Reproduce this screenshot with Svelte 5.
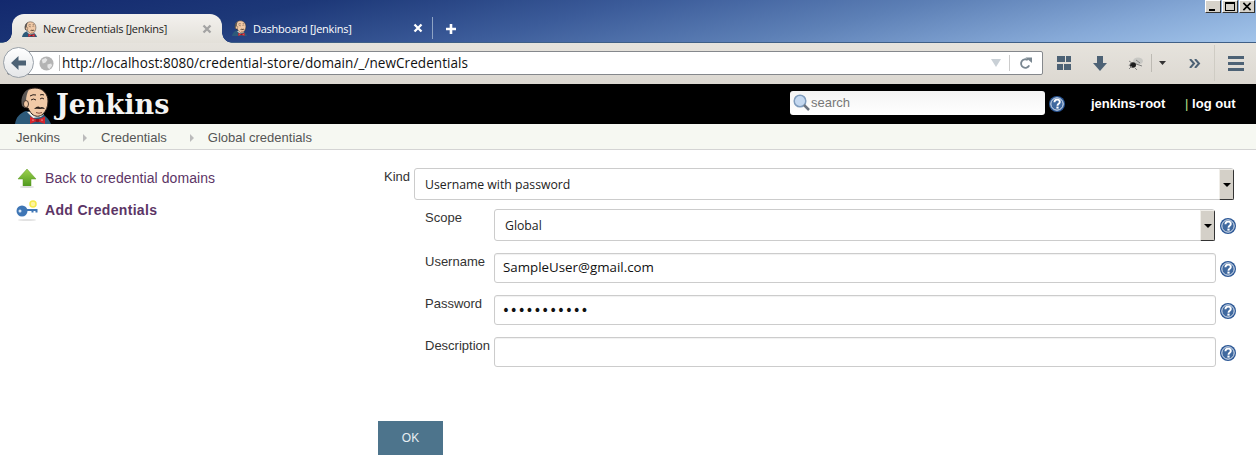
<script>
  const crumbs = ['Jenkins', 'Credentials', 'Global credentials'];
  const rows = [
    { label: 'Username', type: 'text', value: 'SampleUser@gmail.com' },
    { label: 'Password', type: 'password', value: 'samplepass1' },
    { label: 'Description', type: 'text', value: '' }
  ];
</script>

<svg class="defs" width="0" height="0" aria-hidden="true">
  <defs>
    <symbol id="butler" viewBox="0 0 38 38">
      <path d="M0 38c1-7 5-11 11-13l14 2c5 2 9 6 11 11z" fill="#2d5a7a"/>
      <path d="M12 26l6 6 8-1 3-3-6-3z" fill="#f4f1ea"/>
      <path d="M8 18C6 8 12 2 20 2c8 0 13 6 13 13 0 6-2 10-5 13-3 3-8 3-11 0-2-2-3-4-4-6-3 0-5-1-5-4z" fill="#f1c9a6" stroke="#2a1f1a" stroke-width="1"/>
      <path d="M7 20C5 11 9 5 14 3c-2 4-3 8-3 12l1 3-2 4z" fill="#5a5654"/>
      <ellipse cx="11" cy="18" rx="2.500" ry="3.500" fill="#f1c9a6" stroke="#2a1f1a" stroke-width=".8"/>
      <path d="M16 14q2.500-2 5 0M25 13q2-2 4 0M15 10q3-2 6-1M25 9q2-1 4 0" fill="none" stroke="#2a1f1a" stroke-width="1"/>
      <path d="M19 23q4-4 6-1.500 3-1.500 5 1.500-3-.5-5 0-3-.5-6 0z" fill="#2a1f1a"/>
      <path d="M21 26.500q3 1.500 6 0" fill="none" stroke="#7a3a2a" stroke-width=".9"/>
      <path d="M15 30.500l7 3.500 8-3.500V38l-8-3-7 3z" fill="#d4252c"/>
      <circle cx="22.500" cy="34.500" r="1.800" fill="#a01218"/>
      <circle cx="18" cy="34" r=".6" fill="#fff"/><circle cx="27" cy="34" r=".6" fill="#fff"/>
    </symbol>
    <symbol id="help" viewBox="0 0 16 16">
      <circle cx="8" cy="8" r="8" fill="#2a5695"/>
      <circle cx="8" cy="8" r="6.200" fill="#40699f" stroke="#e4ebf4" stroke-width="1"/>
      <path d="M5.400 6.200C5.500 4.500 6.700 3.600 8.100 3.600c1.600 0 2.700.9 2.700 2.300 0 1.900-2.300 1.900-2.300 3.800" fill="none" stroke="#fff" stroke-width="1.900"/>
      <rect x="7.400" y="10.600" width="2.200" height="2" fill="#fff"/>
    </symbol>
    <symbol id="tabx" viewBox="0 0 10 10">
      <path d="M1.500 1.500l7 7M8.500 1.500l-7 7" stroke="currentColor" stroke-width="2.300" fill="none"/>
    </symbol>
  </defs>
</svg>

<div class="chrome">
  <div class="titlebar">
    <div class="tab active">
      <svg class="favicon"><use href="#butler"/></svg>
      <span class="tab-title">New Credentials [Jenkins]</span>
      <svg class="tab-x"><use href="#tabx"/></svg>
    </div>
    <div class="tab">
      <svg class="favicon"><use href="#butler"/></svg>
      <span class="tab-title">Dashboard [Jenkins]</span>
      <svg class="tab-x"><use href="#tabx"/></svg>
    </div>
    <span class="tab-sep"></span>
    <svg class="plus" width="12" height="12" viewBox="0 0 12 12"><path d="M6 1v10M1 6h10" stroke="#fff" stroke-width="2.600"/></svg>
    <div class="winbtns">
      <span class="winbtn"><i class="min"></i></span>
      <span class="winbtn"><i class="max"></i></span>
      <span class="winbtn"><svg class="winx" viewBox="0 0 10 10"><path d="M1 1l8 8M9 1l-8 8" stroke="#000" stroke-width="1.800"/></svg></span>
    </div>
  </div>

  <div class="toolbar">
    <div class="urlbar">
      <div class="back">
        <svg width="15" height="14" viewBox="0 0 15 14"><path d="M7.500 0 0 7l7.500 7V9.500H15v-5H7.500z" fill="#4d6275"/></svg>
      </div>
      <svg class="globe" width="15" height="15" viewBox="0 0 16 16"><circle cx="8" cy="8" r="7.500" fill="#b4b4b4"/><path d="M3 4l4-2 2 2-2 3-3 1zM9 9l4-1 1 2-3 4-2-2z" fill="#e6e6e6"/></svg>
      <span class="url-sep"></span>
      <span class="url">http://localhost:8080/credential-store/domain/_/newCredentials</span>
      <svg class="tri" width="10" height="8" viewBox="0 0 10 8"><path d="M0 0h10L5 8z" fill="#c9d0d6"/></svg>
      <span class="url-sep2"></span>
      <svg class="reload" width="13" height="13" viewBox="0 0 14 13"><path d="M11 8.500A4.600 4.600 0 1 1 9.500 2.800" fill="none" stroke="#7a8791" stroke-width="2"/><path d="M7 0h7v6z" fill="#7a8791"/></svg>
    </div>
    <div class="tools">
      <svg width="14" height="14" viewBox="0 0 14 14"><path d="M0 0h8v6H0zM9 0h5v6H9zM0 8h6v6H0zM7 8h7v6H7z" fill="#4d6275"/></svg>
      <svg class="t-down" width="14" height="15" viewBox="0 0 14 15"><path d="M4 0h6v7h4l-7 8-7-8h4z" fill="#4d6275"/></svg>
      <svg class="t-bug" width="16" height="14" viewBox="0 0 16 14"><ellipse cx="10" cy="5" rx="5" ry="3.500" fill="#c8c8c4"/><ellipse cx="5" cy="9" rx="3" ry="2.800" fill="#1c1c1c"/><path d="M1 5l3 2M1 13l3-3M7 12l2 2M14 10 8 8M8 4l4 3M3 7l-2 3" stroke="#777" stroke-width=".9"/></svg>
      <span class="t-sep"></span>
      <svg class="t-caret" width="7" height="4" viewBox="0 0 7 4"><path d="M0 0h7L3.500 4z" fill="#333"/></svg>
      <svg class="t-more" width="12" height="9" viewBox="0 0 12 9"><path d="M1 0l4 4.500L1 9M6 0l4 4.500L6 9" fill="none" stroke="#4d6275" stroke-width="2"/></svg>
      <span class="t-sep2"></span>
      <span class="burger"><i></i><i></i><i></i></span>
    </div>
  </div>
</div>

<header class="jk-header">
  <svg class="jk-logo"><use href="#butler"/></svg>
  <span class="jk-name">Jenkins</span>
  <div class="jk-search">
    <svg width="17" height="17" viewBox="0 0 17 17"><circle cx="7" cy="7" r="5.800" fill="#c4d8f0" stroke="#7f9cbd" stroke-width="1.500"/><path d="M11 11l5 5" stroke="#6c7480" stroke-width="2.500"/></svg>
    <span>search</span>
  </div>
  <svg class="jk-help"><use href="#help"/></svg>
  <span class="jk-user">jenkins-root</span>
  <span class="jk-logout"><i>|</i> log out</span>
</header>

<nav class="crumbs">
  {#each crumbs as c, i}
    {#if i > 0}<span class="crumb-arrow"></span>{/if}
    <span>{c}</span>
  {/each}
</nav>

<main class="page">
  <aside class="side">
    <div class="side-item">
      <svg width="20" height="20" viewBox="0 0 20 20">
        <defs><linearGradient id="arrowfill" x1="0" y1="0" x2="0" y2="1"><stop offset="0" stop-color="#9fd24f"/><stop offset="1" stop-color="#4f9a1e"/></linearGradient></defs>
        <path d="M10 1 19 11h-5v7H6v-7H1z" fill="url(#arrowfill)" stroke="#5d9a24" stroke-width=".5"/>
        <ellipse cx="10" cy="19" rx="7" ry="1" fill="#dcdcdc"/>
      </svg>
      <span>Back to credential domains</span>
    </div>
    <div class="side-item strong">
      <svg width="22" height="21" viewBox="0 0 22 21">
        <circle cx="17" cy="4" r="3" fill="#fff4a0" stroke="#f5e94a" stroke-width="1.500"/>
        <circle cx="6" cy="11" r="5.500" fill="#3f76b5"/>
        <path d="M10 9h11.500v3.500h-2v-1.500h-2v1.500h-2v-1.500H10z" fill="#3f76b5"/>
        <circle cx="4" cy="11" r="1.500" fill="#d8e6f4"/>
        <ellipse cx="11" cy="20" rx="9" ry="1" fill="#e2e2e2"/>
      </svg>
      <span>Add Credentials</span>
    </div>
  </aside>

  <form class="form" onsubmit={(e) => e.preventDefault()}>
    <div class="kind-row">
      <label for="kind">Kind</label>
      <div class="select">
        <select id="kind"><option>Username with password</option></select>
        <span class="sel-btn"><i></i></span>
      </div>
    </div>

    <div class="fields">
      <label for="scope" class="flabel">Scope</label>
      <div class="select scope">
        <select id="scope"><option>Global</option></select>
        <span class="sel-btn"><i></i></span>
      </div>
      <svg class="help"><use href="#help"/></svg>

      {#each rows as r}
        <label for={r.label} class="flabel">{r.label}</label>
        <input id={r.label} type={r.type} value={r.value} />
        <svg class="help"><use href="#help"/></svg>
      {/each}
    </div>

    <button class="ok" type="submit">OK</button>
  </form>
</main>

<style>
  :global(body) { margin: 0; background: #fff; font-family: "Liberation Sans", Arial, sans-serif; overflow: hidden; }
  .defs { position: absolute; }

  .titlebar {
    position: relative;
    height: 43px;
    box-sizing: border-box;
    padding-left: 12px;
    display: flex;
    align-items: flex-end;
    background: linear-gradient(168deg, #13296e 0%, #1d3878 22%, #3c5c9a 45%, #5d80b6 65%, #86a9d7 85%, #a2c4ea 100%);
    border-bottom: 1px solid #3f5f86;
  }
  .tab {
    position: relative;
    width: 210px;
    height: 28px;
    box-sizing: border-box;
    padding: 0 9px 0 10px;
    display: flex;
    align-items: center;
    color: #fff;
    font: 11px "Open Sans", sans-serif;
    letter-spacing: -0.25px;
  }
  .tab.active {
    color: #222;
    background: linear-gradient(#f3f1ee, #e3e0d9);
    border-radius: 12px 12px 0 0;
    margin-bottom: -1px;
    height: 29px;
  }
  .tab.active::before,
  .tab.active::after {
    content: "";
    position: absolute;
    bottom: 0;
    width: 10px;
    height: 10px;
  }
  .tab.active::before { left: -10px; background: radial-gradient(circle at 0 0, transparent 9.500px, #e3e0d9 10px); }
  .tab.active::after { right: -10px; background: radial-gradient(circle at 100% 0, transparent 9.500px, #e3e0d9 10px); }
  .favicon { width: 16px; height: 16px; flex: none; margin-right: 5px; }
  .tab-title { flex: 1; }
  .tab-x { width: 10px; height: 10px; flex: none; color: #fff; }
  .tab.active .tab-x { color: #a3a3a3; margin-right: 1px; }
  .tab-sep { width: 1px; height: 22px; background: #8ea4c4; margin: 0 12px 3px 0; }
  .plus { margin: 0 0 7px 0; }

  .winbtns { position: absolute; top: 0; right: 1px; display: flex; gap: 1px; }
  .winbtn {
    width: 16px; height: 13px; box-sizing: border-box;
    background: #d6d2ca;
    border: 1px solid; border-color: #fff #333 #333 #fff;
    display: flex; align-items: center; justify-content: center;
  }
  .winbtn .min { width: 6px; height: 2px; background: #000; margin-top: 6px; margin-right: 2px; }
  .winbtn .max { width: 10px; height: 9px; border: 1px solid #000; border-top-width: 2px; box-sizing: border-box; }
  .winx { width: 10px; height: 9px; }

  .toolbar {
    height: 41px;
    box-sizing: border-box;
    display: flex;
    align-items: center;
    padding-left: 3px;
    background: linear-gradient(#e6e3dd, #dcd8d1);
    padding-bottom: 1px;
  }
  .urlbar {
    position: relative;
    margin-left: 4px;
    width: 1036px;
    height: 24px;
    box-sizing: border-box;
    background: #fff;
    border: 1px solid #85888c;
    border-radius: 2px;
    display: flex;
    align-items: center;
    padding-left: 31px;
  }
  .back {
    position: absolute;
    left: -5px;
    top: -5px;
    width: 31px;
    height: 31px;
    box-sizing: border-box;
    border-radius: 50%;
    border: 1px solid #9aa2aa;
    background: linear-gradient(#fff, #e4e6e8);
    display: flex;
    align-items: center;
    justify-content: center;
  }
  .globe { flex: none; }
  .url-sep { width: 1px; height: 16px; background: #bbb; margin: 0 2px 0 5px; }
  .url { flex: 1; font: 13.560px "Open Sans", sans-serif; color: #111; letter-spacing: .05px; white-space: nowrap; }
  .tri { margin-right: 8px; }
  .url-sep2 { width: 1px; height: 16px; background: #ccc; margin-right: 9px; }
  .reload { margin-right: 10px; }

  .tools { display: flex; align-items: center; margin-left: 14px; flex: 1; }
  .t-down { margin-left: 22px; }
  .t-bug { margin-left: 21px; }
  .t-sep { width: 1px; height: 18px; background: #bdbab3; margin-left: 7px; }
  .t-caret { margin-left: 7px; }
  .t-more { margin-left: 23px; }
  .t-sep2 { width: 1px; height: 36px; background: #cfccc4; margin-left: 13px; }
  .burger { margin-left: 13px; display: flex; flex-direction: column; gap: 3px; }
  .burger i { display: block; width: 16px; height: 3px; background: #4d6275; }

  .jk-header {
    height: 40px;
    background: #000;
    display: flex;
    align-items: center;
    padding-left: 15px;
    color: #fff;
  }
  .jk-logo { width: 38px; height: 38px; align-self: flex-end; flex: none; }
  .jk-name {
    font: 700 27px "DejaVu Serif", serif;
    margin-left: 3px;
    width: 734px;
    color: #f4f4f4;
  }
  .jk-search {
    width: 255px;
    height: 24px;
    box-sizing: border-box;
    background: linear-gradient(#f4f4f4, #fff);
    border-radius: 3px;
    display: flex;
    align-items: center;
    padding-left: 3px;
    color: #777;
    font-size: 13px;
    margin-bottom: 3px;
    gap: 1px;
  }
  .jk-help { width: 16px; height: 16px; margin-left: 4px; flex: none; }
  .jk-user { font-size: 13px; font-weight: 700; margin: 0 0 2px 26px; width: 94px; }
  .jk-logout { font-size: 13px; font-weight: 700; letter-spacing: .03px; margin-bottom: 2px; }
  .jk-logout i { font-style: normal; font-weight: 400; color: #b6e88a; }

  .crumbs {
    height: 26px;
    box-sizing: border-box;
    background: #f6f8f2;
    border-bottom: 1px solid #d4d4d4;
    padding: 2px 0 0 16px;
    display: flex;
    align-items: center;
    font-size: 13px;
    color: #555;
  }
  .crumb-arrow {
    width: 0; height: 0;
    border-left: 4px solid #bbb;
    border-top: 4px solid transparent;
    border-bottom: 4px solid transparent;
    margin: 0 14px 0 23px;
  }

  .page { display: flex; }
  .side { width: 378px; box-sizing: border-box; padding: 18px 0 0 17px; }
  .side-item {
    display: flex; align-items: center; gap: 8px;
    height: 20px;
    font-size: 14px;
    letter-spacing: .08px;
    color: #5c3566;
    margin-bottom: 12px;
  }
  .side-item svg { flex: none; }
  .side-item.strong { font-weight: 700; letter-spacing: .33px; gap: 7px; margin-left: -1px; }

  .form { flex: 1; padding-top: 18px; }
  .kind-row { display: flex; padding-left: 6px; }
  .kind-row label { width: 30px; font-size: 13px; padding-top: 1px; }
  label { color: #333; }
  .select { position: relative; width: 820px; height: 32px; }
  select {
    appearance: none;
    width: 100%; height: 100%;
    box-sizing: border-box;
    border: 1px solid #ccc;
    border-radius: 3px;
    background: #fff;
    padding: 0 0 0 10px;
    font: 12.250px "Open Sans", sans-serif;
    color: #222;
  }
  .sel-btn {
    position: absolute; right: 0; top: 1px; bottom: 0;
    width: 15px;
    box-sizing: border-box;
    background: #d4d0c8;
    border: 1px solid; border-color: #f0eee9 #333 #333 #f0eee9;
    border-radius: 0 2px 2px 0;
    display: flex; align-items: center; justify-content: center;
  }
  .sel-btn i { width: 0; height: 0; border: 4px solid transparent; border-top-color: #000; border-bottom: 0; }

  .fields {
    display: grid;
    grid-template-columns: 69px 722px 22px;
    grid-template-rows: 32px 30px 30px 30px;
    row-gap: 12px;
    margin: 9px 0 0 47px;
  }
  .flabel { font-size: 13px; padding-top: 1px; }
  .select.scope { width: 721px; height: 32px; }
  .fields svg.help { width: 16px; height: 16px; align-self: center; margin-left: 4px; margin-top: 2px; }
  input {
    width: 100%;
    box-sizing: border-box;
    height: 30px;
    border: 1px solid #ccc;
    border-radius: 3px;
    padding: 0 8px 2px;
    font: 13.330px "Open Sans", sans-serif;
    color: #111;
    background: #fff;
    outline: none;
    box-shadow: inset 0 1px 1px rgba(0, 0, 0, .06);
  }
  input[type="password"] { font-family: "DejaVu Sans", sans-serif; padding: 0 8px 0 7px; }
  .ok {
    display: block;
    margin-top: 54px;
    width: 65px;
    height: 34px;
    border: 0;
    background: #4d748c;
    color: #e8eef2;
    font: 12px "Liberation Sans", sans-serif;
  }
</style>
